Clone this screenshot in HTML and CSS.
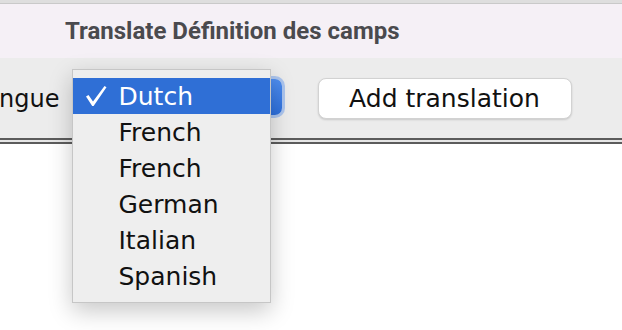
FILE: index.html
```html
<!DOCTYPE html>
<html>
<head>
    <title>Translate Définition des camps</title>
    <meta charset="utf-8">
    <link rel="stylesheet" href="styles.css">
</head>
<body>
    <div class="window">
        <div class="top-strip"></div>
        <div class="titlebar">
            <h1>Translate Définition des camps</h1>
        </div>

        <div class="toolbar">
            <span class="label">Langue</span>
            <div class="select-wrap">
                <div class="select-box"></div>
                <ul class="menu">
                    <li class="selected">
                        <span class="check">
                            <svg width="22" height="22" viewBox="0 0 22 22">
                                <path d="M1 11.5 L3.5 10 L8 16.5 L19.5 1 L21.5 2.2 L8.6 21 L7.2 21 Z" fill="#ffffff"/>
                            </svg>
                        </span>Dutch
                    </li>
                    <li><span class="check"></span>French</li>
                    <li><span class="check"></span>French</li>
                    <li><span class="check"></span>German</li>
                    <li><span class="check"></span>Italian</li>
                    <li><span class="check"></span>Spanish</li>
                </ul>
            </div>
            <button class="btn">Add translation</button>
        </div>
        <div class="separator"></div>

        <div class="content"></div>
    </div>
</body>
</html>
```

FILE: styles.css
```css
body {
    margin: 0;
    background: #ffffff;
    font-family: 'DejaVu Sans', 'Liberation Sans', sans-serif;
}
.window {
    width: 622px;
    height: 330px;
    overflow: hidden;
}
.top-strip {
    height: 3px;
    background: #dedede;
    border-bottom: 1px solid #c9c9c9;
}
.titlebar {
    height: 54px;
    background: #f5f0f6;
    display: flex;
    align-items: center;
    padding-left: 65px;
}
.titlebar h1 {
    margin: 0;
    font-family: 'Roboto', 'Liberation Sans', sans-serif;
    font-weight: 700;
    font-size: 24px;
    color: #4a4a4e;
}
.toolbar {
    height: 80px;
    background: #ececec;
    display: flex;
    align-items: center;
}
.label {
    font-size: 24px;
    color: #111;
    margin-left: -29px;
    margin-right: 14px;
    margin-top: 2px;
}
.select-wrap {
    position: relative;
    width: 211px;
    height: 48px;
    margin-right: 33px;
}
.select-box {
    width: 205px;
    height: 36px;
    margin: 5px 3px 3px;
    background: linear-gradient(#4f8ef0, #2d6fdc);
    border-radius: 7px;
    box-shadow: 0 0 0 3px rgba(120, 165, 240, 0.55);
}
.menu {
    position: absolute;
    left: -2px;
    top: -5px;
    width: 197px;
    margin: 0;
    padding: 8px 0 8px;
    list-style: none;
    background: #eeeeee;
    border: 1px solid #c6c6c6;
    box-shadow: 0 8px 22px rgba(0, 0, 0, 0.22);
}
.menu li {
    height: 36px;
    display: flex;
    align-items: center;
    font-size: 25px;
    color: #111;
}
.menu li.selected {
    background: #2f6fd6;
    color: #fff;
}
.check {
    width: 34px;
    padding-left: 12px;
    flex-shrink: 0;
    display: flex;
    align-items: center;
}
.btn {
    width: 254px;
    height: 41px;
    background: #ffffff;
    border: 1px solid #d2d2d2;
    border-radius: 8px;
    box-shadow: 0 1px 2px rgba(0, 0, 0, 0.15);
    font-family: 'DejaVu Sans', 'Liberation Sans', sans-serif;
    font-size: 25px;
    color: #111;
    padding: 0;
}
.separator {
    height: 2px;
    border-top: 2px solid #5c5c5c;
    border-bottom: 2px solid #5c5c5c;
    background: #e6e6e6;
}
.content {
    height: 200px;
    background: #ffffff;
}
```
